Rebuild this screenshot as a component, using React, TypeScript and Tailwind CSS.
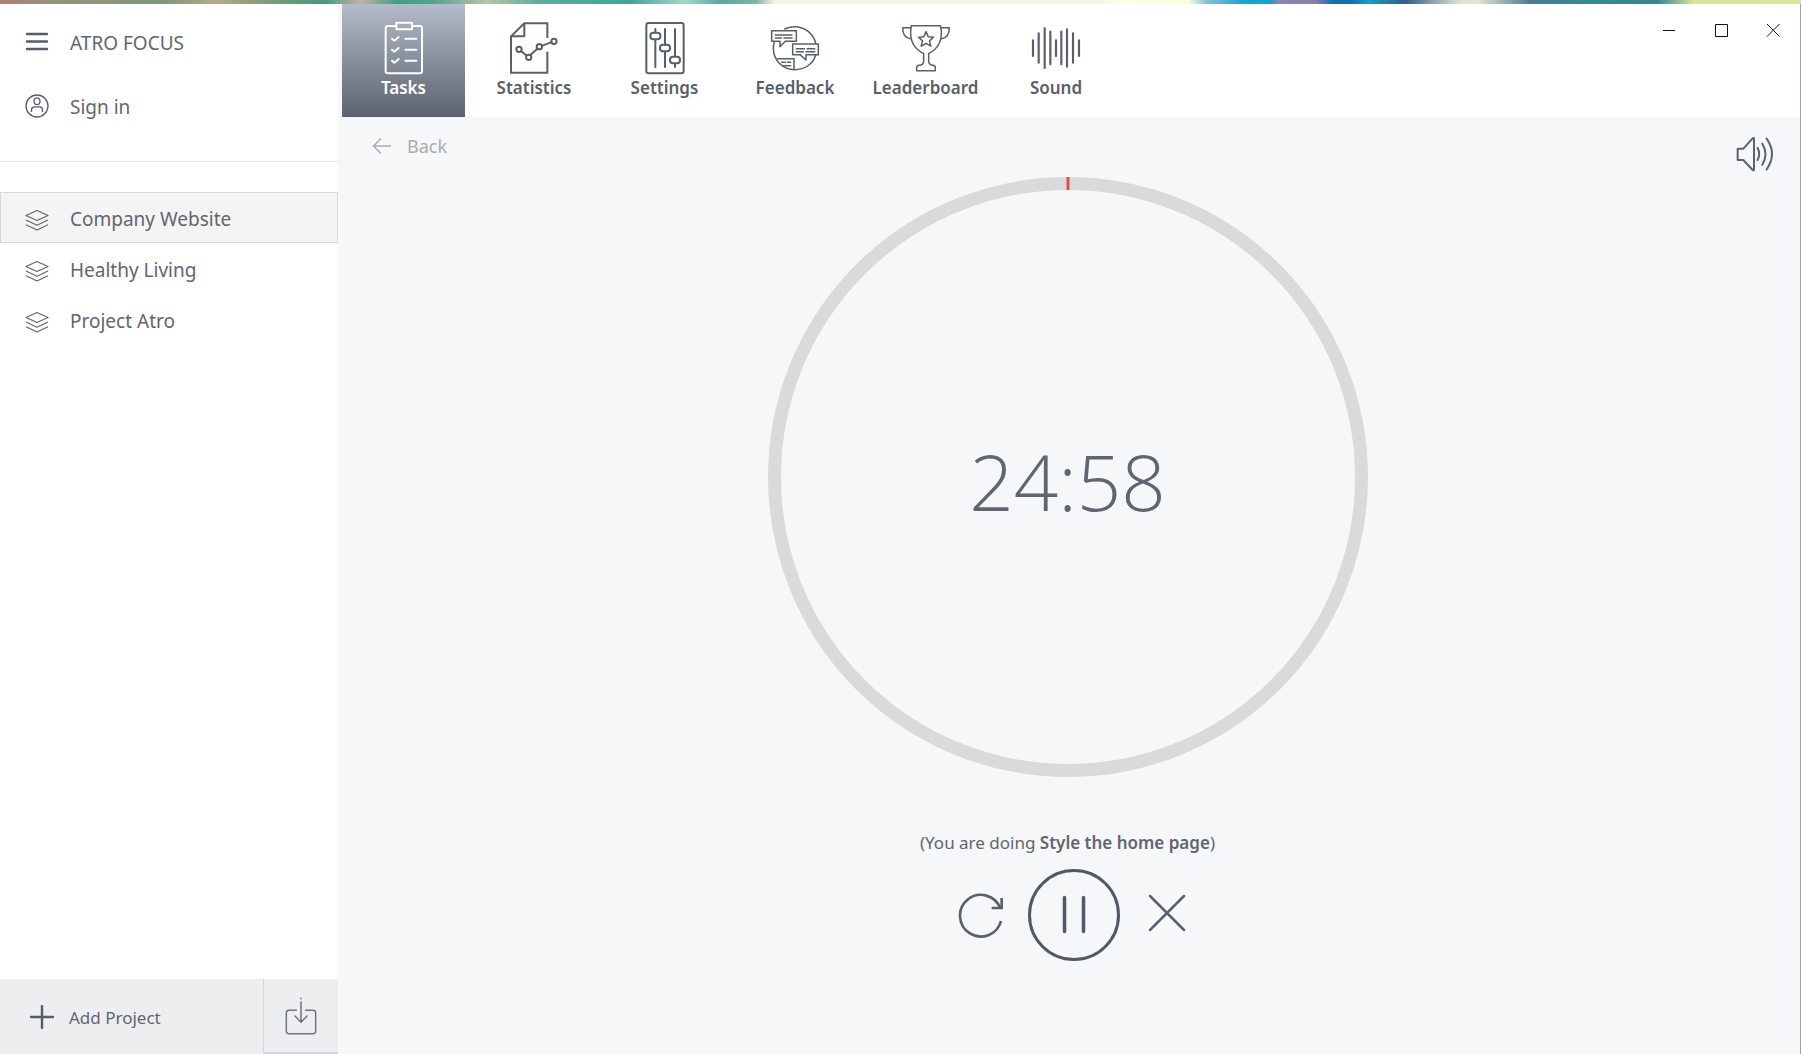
import React from "react";

type TabProps = { label: string; active?: boolean; children: React.ReactNode; viewBox: string };

function Tab({ label, active = false, children, viewBox }: TabProps) {
  return (
    <button
      type="button"
      aria-current={active ? "page" : undefined}
      className={
        active
          ? "flex w-[123px] flex-col items-center bg-linear-to-b from-[#b4bccb] to-[#5c6370] pt-4 text-white"
          : "flex w-[123px] flex-col items-center pt-4 text-[#585f6b]"
      }
    >
      <svg
        className="size-14"
        viewBox={viewBox}
        fill="none"
        stroke="currentColor"
        strokeWidth="6"
        strokeLinecap="round"
        strokeLinejoin="round"
        aria-hidden="true"
      >
        {children}
      </svg>
      <span className="text-[17px] leading-6 font-semibold">{label}</span>
    </button>
  );
}

function LayersIcon() {
  return (
    <svg className="h-6 w-6 shrink-0" viewBox="0 0 24 24" fill="none" stroke="#666" strokeWidth="1.200" strokeLinejoin="round" aria-hidden="true">
      <path d="M12 2.5 23 7.5 12 12.5 1 7.5Z" />
      <path d="M1 12 12 17.2 23 12M1 16.7 12 22 23 16.7" />
    </svg>
  );
}

const projects = ["Company Website", "Healthy Living", "Project Atro"];

function Sidebar() {
  return (
    <aside className="flex w-[338px] shrink-0 flex-col bg-white text-[#5f6670]">
      <div className="flex h-[158px] flex-col border-b border-[#e4e5e6] pt-3">
        <button type="button" className="flex h-[52px] items-center gap-[21px] pl-[25px] text-left text-[19px]">
          <svg className="h-6 w-6" viewBox="0 0 24 24" stroke="#565d6d" strokeWidth="2.4" strokeLinecap="round" aria-hidden="true">
            <path d="M2 4H22M2 11.5H22M2 19H22" />
          </svg>
          <span className="pt-0.5">ATRO FOCUS</span>
        </button>
        <button type="button" className="mt-3 flex h-[52px] items-center gap-[21px] pl-[25px] text-left text-[19px]">
          <svg className="h-6 w-6" viewBox="0 0 24 24" fill="none" stroke="#565d6d" strokeWidth="1.3" aria-hidden="true">
            <circle cx="12" cy="12" r="11" />
            <ellipse cx="12" cy="7.2" rx="3" ry="3.4" />
            <path d="M6.5 18V16Q6.5 12.8 9.5 12.8H14.5Q17.5 12.8 17.5 16V18" />
          </svg>
          <span className="pt-0.5">Sign in</span>
        </button>
      </div>
      <nav className="flex flex-1 flex-col pt-[30px]" aria-label="Projects">
        {projects.map((name, i) => (
          <a
            key={name}
            href={"#project-" + (i + 1)}
            className={
              i === 0
                ? "flex h-[51px] items-center gap-[21px] border border-[#d8d9da] bg-[#f4f4f4] pt-1 pl-6 text-[19px]"
                : "flex h-[51px] items-center gap-[21px] border border-transparent pt-1 pl-6 text-[19px]"
            }
          >
            <LayersIcon />
            {name}
          </a>
        ))}
      </nav>
      <div className="flex h-[75px] bg-[#edeeef]">
        <button type="button" className="flex flex-1 items-center gap-[15px] pl-[30px] text-[17px]">
          <svg className="h-6 w-6" viewBox="0 0 24 24" stroke="#565d6a" strokeWidth="2.4" strokeLinecap="round" aria-hidden="true">
            <path d="M12 1V23M1 12H23" />
          </svg>
          <span className="pt-0.5">Add Project</span>
        </button>
        <button type="button" aria-label="Import" className="flex w-[75px] items-center justify-center border-b-2 border-l border-[#d5d7da]">
          <svg className="h-10 w-8" viewBox="0 0 96 120" fill="none" stroke="#6f7680" strokeWidth="4.500" strokeLinecap="round" strokeLinejoin="round" aria-hidden="true">
            <path d="M34 43H12Q4 43 4 51V105Q4 113 12 113H84Q92 113 92 105V51Q92 43 84 43H62" />
            <path d="M48 18V78M30 60 48 79 66 60M48 7V8" />
          </svg>
        </button>
      </div>
    </aside>
  );
}

function Header() {
  return (
    <header className="flex h-[113px] bg-white">
      <div className="w-1 bg-[#f5f7f9]" />
      <nav className="grid w-[783px] grid-cols-6" aria-label="Main">
        <Tab label="Tasks" active viewBox="136 60 168 168">
          <path d="M196 78H172Q165 78 165 85V213Q165 220 172 220H267Q274 220 274 213V85Q274 78 267 78H244" />
          <path d="M197 68H244V88H197Z" />
          <path d="M184 116 191 122 204 111M184 149 191 155 204 144M184 182 191 188 204 177M224 116H257M224 149H257M224 182H257" />
        </Tab>
        <Tab label="Statistics" viewBox="528 60 168 168">
          <path d="M652 114V70H583L543 109V218H652V155M583 70V109H543" strokeLinecap="butt" strokeLinejoin="miter" />
          <path d="M574 154 588 166M602 164 621 147M637 137 663 127" />
          <circle cx="567" cy="148" r="8" />
          <circle cx="596" cy="172" r="8" />
          <circle cx="628" cy="140" r="8" />
          <circle cx="672" cy="124" r="8" />
        </Tab>
        <Tab label="Settings" viewBox="919 60 168 168">
          <rect x="947" y="69" width="112" height="151" rx="7" />
          <path d="M974 87V98M974 119V201M1003 87V134M1003 156V201M1033 87V169M1033 192V201" />
          <rect x="959" y="98" width="30" height="20" rx="9" />
          <rect x="988" y="134" width="30" height="20" rx="9" />
          <rect x="1018" y="170" width="30" height="20" rx="9" />
        </Tab>
        <Tab label="Feedback" viewBox="111 60 168 168">
          <g strokeWidth="4.500">
            <path d="M164 87Q179 80 194 80C224 80 251 101 257 130M257 166C249 192 224 209 194 209C158 209 130 181 130 145Q130 134 133 127" />
            <path d="M125 92H199V124H166L150 140V124H125Z" />
            <path d="M188 132H265V164H228V180L210 164H188Z" />
            <path d="M143 176H192V206M136 105H186M136 114H154M162 114H186M199 146H223M231 146H254M199 155H220M228 155H254M155 187H166M172 187H182M160 197H182" />
          </g>
        </Tab>
        <Tab label="Leaderboard" viewBox="502 60 168 168">
          <g strokeWidth="4.500">
            <path d="M542 77H629L632 92Q635 140 594 161V182Q594 195 607 196Q614 197 614 204V212H558V204Q558 197 566 196Q579 195 579 182V161Q537 140 540 92Z" />
            <path d="M541 83H516Q516 113 539 116M631 83H656Q656 113 633 116" />
            <path d="m586 95 6.500 15 16 1.500-12 11 4 16-14.500-8.500-14.500 8.500 4-16-12-11 16-1.500Z" />
          </g>
        </Tab>
        <Tab label="Sound" viewBox="894 60 168 168">
          <path d="M909 121V168M926 100V188M944 85V204M961 95V193M978 121V168M994 95V193M1011 88V200M1029 100V188M1047 121V168" strokeWidth="6.500" />
        </Tab>
      </nav>
      <div className="mr-px ml-auto flex h-[52px] items-center text-[#111]">
        <button type="button" aria-label="Minimize" className="flex h-full w-[52px] items-center justify-center">
          <svg className="size-4" viewBox="0 0 16 16" stroke="currentColor" aria-hidden="true"><path d="M2 8.500H14" /></svg>
        </button>
        <button type="button" aria-label="Maximize" className="flex h-full w-[52px] items-center justify-center">
          <svg className="size-4" viewBox="0 0 16 16" fill="none" stroke="currentColor" aria-hidden="true"><path d="M2.500 2.500H14.500V14.500H2.500Z" /></svg>
        </button>
        <button type="button" aria-label="Close" className="flex h-full w-[52px] items-center justify-center">
          <svg className="size-4" viewBox="0 0 16 16" stroke="currentColor" aria-hidden="true"><path d="M2 2 14.500 14.500M14.500 2 2 14.500" /></svg>
        </button>
      </div>
    </header>
  );
}

function Timer() {
  return (
    <div className="grid size-[600px] place-items-center">
      <svg className="col-start-1 row-start-1 size-full" viewBox="0 0 600 600" fill="none" aria-hidden="true">
        <circle cx="300" cy="300" r="293.500" stroke="#dadada" strokeWidth="13" />
        <path d="M300 0V13" stroke="#e04f48" strokeWidth="3" />
      </svg>
      <time className="col-start-1 row-start-1 pt-2 font-['Open_Sans','Noto_Sans',sans-serif] text-[78px] leading-none font-light text-[#5f6670]">24:58</time>
    </div>
  );
}

function Controls() {
  return (
    <div className="mt-3 flex items-center gap-[23px] pl-3 text-[#5a616c]">
      <button type="button" aria-label="Restart">
        <svg className="size-12" viewBox="0 0 144 144" fill="none" stroke="currentColor" strokeWidth="8" aria-hidden="true">
          <path d="M132 90A62.500 62.500 0 1 1 130 52" />
          <path d="M134 21V51H104" />
        </svg>
      </button>
      <button type="button" aria-label="Pause">
        <svg className="size-[92px]" viewBox="0 0 92 92" fill="none" stroke="#515967" strokeWidth="3" strokeLinecap="round" aria-hidden="true">
          <circle cx="46" cy="46" r="44.500" />
          <path d="M36.500 28.500V62.500M55.500 28.500V62.500" strokeWidth="3.500" />
        </svg>
      </button>
      <button type="button" aria-label="Stop">
        <svg className="size-12" viewBox="0 0 48 48" stroke="currentColor" strokeWidth="2.500" strokeLinecap="round" aria-hidden="true">
          <path d="M7 5 41 39M41 5 7 39" />
        </svg>
      </button>
    </div>
  );
}

function FocusPage() {
  return (
    <main className="flex flex-1 flex-col bg-[#f5f7f9]">
      <div className="flex h-[60px] items-start justify-between pr-6 pl-[34px]">
        <button type="button" className="flex h-[58px] items-center gap-[15px] text-[18px] text-[#a9acb0]">
          <svg className="h-5 w-5" viewBox="0 0 20 20" fill="none" stroke="currentColor" strokeWidth="1.500" aria-hidden="true">
            <path d="M19 10H1.500M9 2.500 1.500 10 9 17.500" />
          </svg>
          Back
        </button>
        <button type="button" aria-label="Volume" className="mt-[17px]">
          <svg className="h-10 w-10" viewBox="0 0 120 120" fill="none" stroke="#5c6370" strokeWidth="6" strokeLinecap="round" strokeLinejoin="round" aria-hidden="true">
            <path d="M5 44H22L50 13Q54 10 54 15V106Q54 111 50 108L22 78H5Z" />
            <path d="M65 42Q74 60 65 78M79 29Q98 60 79 92M92 14Q124 60 92 106" />
          </svg>
        </button>
      </div>
      <div className="flex flex-col items-center pr-[3px]">
        <Timer />
        <p className="mt-[52px] text-[17px] leading-7 text-[#5f6670]">
          (You are doing <strong className="font-semibold">Style the home page</strong>)
        </p>
        <Controls />
      </div>
    </main>
  );
}

export default function App() {
  return (
    <div className="flex min-h-screen flex-col bg-[#f5f7f9] font-['Noto_Sans','Open_Sans',sans-serif]">
      <div className="h-1 bg-[linear-gradient(90deg,#b07f72_0%,#94937a_3%,#7f9a76_9%,#b5a98b_12%,#7d9b78_15%,#3f9b82_18%,#c3b59c_20%,#3fa085_22%,#4fa48c_24%,#b9c3a8_27%,#58b09c_30%,#3fa596_35%,#a5d8cc_38%,#55aa9e_40%,#80b5a5_42%,#f1f4e8_43%,#f3f5e8_61%,#fffde4_62%,#fdfbe0_66%,#7fc0d8_67%,#14a8d4_69%,#0fa3d0_70.500%,#8c83b5_71%,#8c7fb0_73%,#0f6fae_74%,#0b72ad_75%,#139fc7_76%,#2c5f8c_78%,#dfe0cf_81%,#e7e6d2_82%,#49799a_85%,#2f8d98_88%,#338690_92%,#d5e69a_94%,#d8e798_100%)]" />
      <div className="flex flex-1 border-r border-[#9a9fae]">
        <Sidebar />
        <div className="flex flex-1 flex-col">
          <Header />
          <FocusPage />
        </div>
      </div>
    </div>
  );
}
